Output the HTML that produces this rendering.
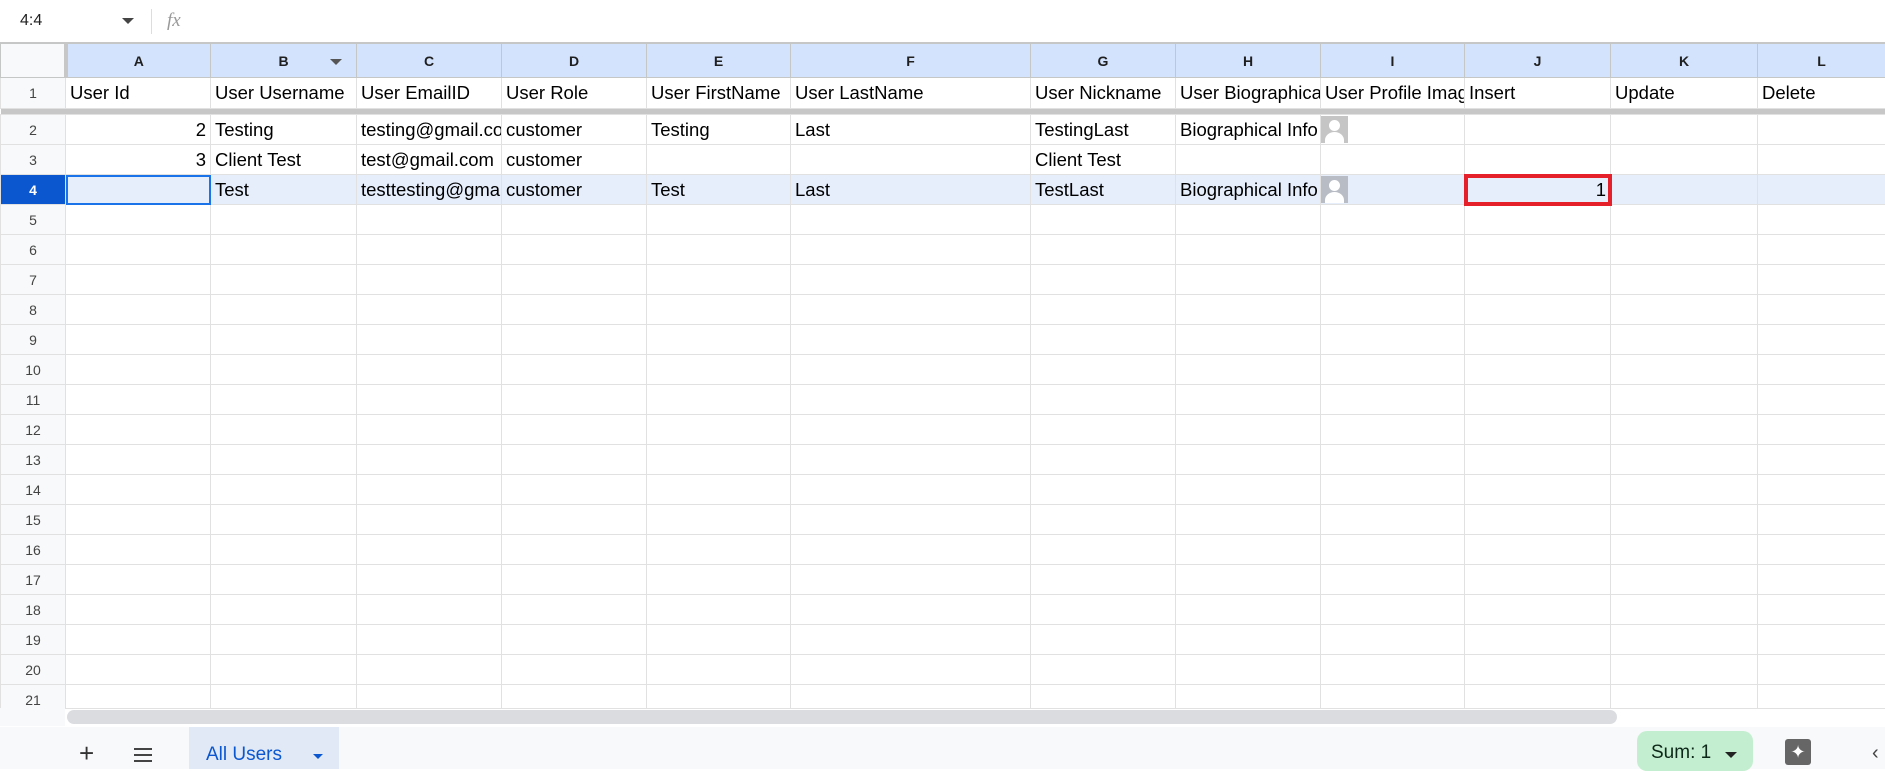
<!DOCTYPE html><html><head><style>
body{margin:0;width:1885px;height:769px;overflow:hidden;background:#fff;font-family:"Liberation Sans",Arial,sans-serif;position:relative}
.top{position:absolute;left:0;top:0;width:1885px;height:43px;background:#fff;border-bottom:1px solid #c7c7c7;box-sizing:border-box}
table{position:absolute;left:0;top:43px;border-collapse:collapse;table-layout:fixed;width:1885px}
td{border:1px solid #e1e1e1;padding:0 4px;font-size:18.5px;color:#000;white-space:nowrap;overflow:hidden;height:30px;box-sizing:border-box}
tr.h td{background:#d3e3fd;font-size:14px;font-weight:bold;text-align:center;height:34px;color:#1f1f1f;border-color:#c4c7c5}
td.n{background:#f8f9fa;font-size:14px;text-align:center;color:#444;padding:0}
tr.r1 td{height:31px}
tr.sep td{height:6px;padding:0;background:#c7c7c7;border:none}
tr.sel td{background:#e6eefc}
tr.sel td.n{background:#0b57d0;color:#fff;font-weight:bold}
.r{text-align:right}
.av{display:inline-block;width:27px;height:27px;background:#c5c5c5;vertical-align:middle;margin-left:-4px;position:relative;overflow:hidden}
.av:before{content:"";position:absolute;left:8px;top:4px;width:11px;height:11px;border-radius:50%;background:#fff}
.av:after{content:"";position:absolute;left:4px;top:16px;width:19px;height:16px;border-radius:50% 50% 0 0;background:#fff}
</style></head><body>
<div class="top">
<span style="position:absolute;left:20px;top:12px;font-size:16px;color:#222">4:4</span>
<span style="position:absolute;left:122px;top:18px;border-left:6px solid transparent;border-right:6px solid transparent;border-top:6px solid #444"></span>
<span style="position:absolute;left:151px;top:9px;height:25px;border-left:1px solid #ddd"></span>
<span style="position:absolute;left:167px;top:10px;font-size:19px;color:#999;font-style:italic;font-family:'Liberation Serif',serif">fx</span>
</div>
<table>
<colgroup><col style="width:65px"><col style="width:145px"><col style="width:146px"><col style="width:145px"><col style="width:145px"><col style="width:144px"><col style="width:240px"><col style="width:145px"><col style="width:145px"><col style="width:144px"><col style="width:146px"><col style="width:147px"><col style="width:128px"></colgroup>
<tr class="h"><td style="background:#f8f9fa;border-right:4px solid #c7c7c7"></td><td>A</td><td style="position:relative">B<span style="position:absolute;right:14px;top:15px;border-left:6px solid transparent;border-right:6px solid transparent;border-top:6px solid #555"></span></td><td>C</td><td>D</td><td>E</td><td>F</td><td>G</td><td>H</td><td>I</td><td>J</td><td>K</td><td>L</td></tr>
<tr class="r1"><td class="n">1</td><td>User Id</td><td>User Username</td><td>User EmailID</td><td>User Role</td><td>User FirstName</td><td>User LastName</td><td>User Nickname</td><td>User Biographical</td><td>User Profile Image</td><td>Insert</td><td>Update</td><td>Delete</td></tr>
<tr class="sep"><td colspan="13"></td></tr>
<tr><td class="n">2</td><td class="r">2</td><td>Testing</td><td>testing@gmail.com</td><td>customer</td><td>Testing</td><td>Last</td><td>TestingLast</td><td>Biographical Info</td><td><span class="av"></span></td><td></td><td></td><td></td></tr>
<tr><td class="n">3</td><td class="r">3</td><td>Client Test</td><td>test@gmail.com</td><td>customer</td><td></td><td></td><td>Client Test</td><td></td><td></td><td></td><td></td><td></td></tr>
<tr class="sel"><td class="n">4</td><td style="outline:2px solid #1a73e8;outline-offset:-2px;background:#e6eefc"></td><td>Test</td><td>testtesting@gmail.com</td><td>customer</td><td>Test</td><td>Last</td><td>TestLast</td><td>Biographical Info</td><td><span class="av" style="background:#b8bcc4"></span></td><td class="r" style="outline:4px solid #e5202b;outline-offset:-3px">1</td><td></td><td></td></tr>
<tr><td class="n">5</td><td></td><td></td><td></td><td></td><td></td><td></td><td></td><td></td><td></td><td></td><td></td><td></td></tr>
<tr><td class="n">6</td><td></td><td></td><td></td><td></td><td></td><td></td><td></td><td></td><td></td><td></td><td></td><td></td></tr>
<tr><td class="n">7</td><td></td><td></td><td></td><td></td><td></td><td></td><td></td><td></td><td></td><td></td><td></td><td></td></tr>
<tr><td class="n">8</td><td></td><td></td><td></td><td></td><td></td><td></td><td></td><td></td><td></td><td></td><td></td><td></td></tr>
<tr><td class="n">9</td><td></td><td></td><td></td><td></td><td></td><td></td><td></td><td></td><td></td><td></td><td></td><td></td></tr>
<tr><td class="n">10</td><td></td><td></td><td></td><td></td><td></td><td></td><td></td><td></td><td></td><td></td><td></td><td></td></tr>
<tr><td class="n">11</td><td></td><td></td><td></td><td></td><td></td><td></td><td></td><td></td><td></td><td></td><td></td><td></td></tr>
<tr><td class="n">12</td><td></td><td></td><td></td><td></td><td></td><td></td><td></td><td></td><td></td><td></td><td></td><td></td></tr>
<tr><td class="n">13</td><td></td><td></td><td></td><td></td><td></td><td></td><td></td><td></td><td></td><td></td><td></td><td></td></tr>
<tr><td class="n">14</td><td></td><td></td><td></td><td></td><td></td><td></td><td></td><td></td><td></td><td></td><td></td><td></td></tr>
<tr><td class="n">15</td><td></td><td></td><td></td><td></td><td></td><td></td><td></td><td></td><td></td><td></td><td></td><td></td></tr>
<tr><td class="n">16</td><td></td><td></td><td></td><td></td><td></td><td></td><td></td><td></td><td></td><td></td><td></td><td></td></tr>
<tr><td class="n">17</td><td></td><td></td><td></td><td></td><td></td><td></td><td></td><td></td><td></td><td></td><td></td><td></td></tr>
<tr><td class="n">18</td><td></td><td></td><td></td><td></td><td></td><td></td><td></td><td></td><td></td><td></td><td></td><td></td></tr>
<tr><td class="n">19</td><td></td><td></td><td></td><td></td><td></td><td></td><td></td><td></td><td></td><td></td><td></td><td></td></tr>
<tr><td class="n">20</td><td></td><td></td><td></td><td></td><td></td><td></td><td></td><td></td><td></td><td></td><td></td><td></td></tr>
<tr><td class="n">21</td><td></td><td></td><td></td><td></td><td></td><td></td><td></td><td></td><td></td><td></td><td></td><td></td></tr>
<tr><td class="n">22</td><td></td><td></td><td></td><td></td><td></td><td></td><td></td><td></td><td></td><td></td><td></td><td></td></tr>
</table>
<div style="position:absolute;left:0;top:708px;width:1885px;height:18px;background:#fff;border-top:1px solid #e1e1e1;border-bottom:1px solid #ddd"></div>
<div style="position:absolute;left:0;top:708px;width:65px;height:18px;background:#f8f9fa"></div>
<div style="position:absolute;left:67px;top:710px;width:1550px;height:14px;background:#dadce0;border-radius:7px"></div>
<div style="position:absolute;left:0;top:727px;width:1885px;height:42px;background:#f8f9fa"></div>
<div style="position:absolute;left:79px;top:738px;font-size:26px;color:#333">+</div>
<div style="position:absolute;left:134px;top:748px;width:18px;height:2px;background:#444;box-shadow:0 6px 0 #444,0 12px 0 #444"></div>
<div style="position:absolute;left:189px;top:727px;width:150px;height:42px;background:#e1e9f7"></div>
<div style="position:absolute;left:206px;top:744px;font-size:19px;color:#0b57d0">All Users</div>
<div style="position:absolute;left:313px;top:754px;border-left:5px solid transparent;border-right:5px solid transparent;border-top:5px solid #0b57d0"></div>
<div style="position:absolute;left:1637px;top:731px;width:116px;height:40px;background:#c4eed0;border-radius:10px"></div>
<div style="position:absolute;left:1651px;top:742px;font-size:19px;color:#0d2818">Sum: 1</div>
<div style="position:absolute;left:1725px;top:752px;border-left:6px solid transparent;border-right:6px solid transparent;border-top:6px solid #222"></div>
<div style="position:absolute;left:1785px;top:739px;width:26px;height:26px;background:#666;border-radius:3px;color:#fff;text-align:center;font-size:18px;line-height:26px">✦</div>
<div style="position:absolute;left:1872px;top:742px;font-size:20px;color:#444">‹</div>
</body></html>
